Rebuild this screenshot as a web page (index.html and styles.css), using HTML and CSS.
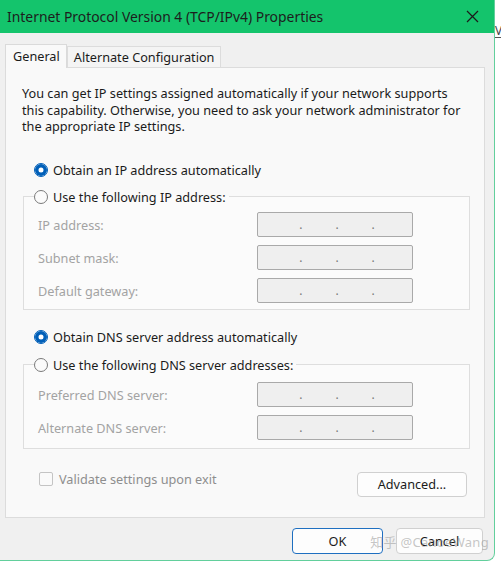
FILE: index.html
```html
<!DOCTYPE html>
<html>
<head>
<meta charset="utf-8">
<link rel="stylesheet" href="styles.css">
</head>
<body>
<div class="screen">
  <div class="dialog">
    <div class="titlebar">
      <span class="title">Internet Protocol Version 4 (TCP/IPv4) Properties</span>
      <svg class="close" width="13" height="13" viewBox="0 0 13 13"><path d="M1 1L12 12M12 1L1 12" stroke="#1b1b1b" stroke-width="1.2" fill="none"/></svg>
    </div>
    <div class="body">
      <div class="tabs">
        <div class="tab active">General</div>
        <div class="tab">Alternate Configuration</div>
      </div>
      <div class="panel">
        <p class="intro">You can get IP settings assigned automatically if your network supports this capability. Otherwise, you need to ask your network administrator for the appropriate IP settings.</p>
        <div class="option first"><span class="radio on"></span><span>Obtain an IP address automatically</span></div>
        <fieldset class="group">
          <legend class="option"><span class="radio"></span><span>Use the following IP address:</span></legend>
          <div class="field"><span class="label">IP address:</span><span class="ipbox"><i>.</i><i>.</i><i>.</i></span></div>
          <div class="field"><span class="label">Subnet mask:</span><span class="ipbox"><i>.</i><i>.</i><i>.</i></span></div>
          <div class="field"><span class="label">Default gateway:</span><span class="ipbox"><i>.</i><i>.</i><i>.</i></span></div>
        </fieldset>
        <div class="option second"><span class="radio on"></span><span>Obtain DNS server address automatically</span></div>
        <fieldset class="group dns">
          <legend class="option"><span class="radio"></span><span>Use the following DNS server addresses:</span></legend>
          <div class="field"><span class="label">Preferred DNS server:</span><span class="ipbox"><i>.</i><i>.</i><i>.</i></span></div>
          <div class="field"><span class="label">Alternate DNS server:</span><span class="ipbox"><i>.</i><i>.</i><i>.</i></span></div>
        </fieldset>
        <div class="bottomrow">
          <div class="check"><span class="box"></span><span>Validate settings upon exit</span></div>
          <button class="btn adv">Advanced...</button>
        </div>
      </div>
      <div class="actions">
        <button class="btn ok">OK</button>
        <button class="btn cancel">Cancel</button>
        <span class="watermark">知乎 @CanoeWang</span>
      </div>
    </div>
  </div>
  <div class="side"><span class="sidechar">V</span></div>
</div>
</body>
</html>
```
FILE: styles.css
```css
* { box-sizing: border-box; }
html, body { margin: 0; padding: 0; background: #fff; }
body {
  font-family: "Noto Sans", "Noto Sans CJK SC", sans-serif;
  font-size: 12.7px;
  color: #1b1b1b;
}
.screen { display: flex; width: 501px; height: 562px; overflow: hidden; }
.dialog {
  width: 495px;
  height: 561px;
  display: flex;
  flex-direction: column;
  border-right: 1px solid #62cf9c;
  border-bottom: 1px solid #62cf9c;
  border-bottom-right-radius: 8px;
  overflow: hidden;
  background: #f0f0f0;
}
.titlebar {
  height: 33px;
  background: #14c46c;
  display: flex;
  align-items: center;
  justify-content: space-between;
  padding: 0 15px 1px 7px;
  flex-shrink: 0;
}
.title { font-size: 13.9px; color: #1d1d1d; }
.close { display: block; margin-top: 1px; }
.body { flex: 1; display: flex; flex-direction: column; padding: 10px 10px 0 5px; }
.tabs { display: flex; align-items: flex-end; height: 24px; }
.tab {
  height: 21px;
  padding: 1px 6px 0 6px;
  border: 1px solid #dcdcdc;
  border-bottom: none;
  background: #f4f4f4;
  color: #1b1b1b;
  line-height: 18px;
}
.tab.active {
  height: 24px;
  padding: 2px 6px 0 7px;
  background: #f9f9f9;
  margin-bottom: -1px;
  position: relative;
  z-index: 1;
  border-color: #dadada;
}
.panel {
  width: 480px;
  height: 451px;
  background: #f9f9f9;
  border: 1px solid #dcdcdc;
  padding: 17px 15px 0 16px;
  display: flex;
  flex-direction: column;
}
.intro { margin: 0; line-height: 16.5px; }
.option { display: flex; align-items: center; gap: 5px; height: 20px; line-height: 20px; }
.option.first { margin: 25px 0 0 12px; }
.option.second { margin: 17px 0 0 12px; }
.radio {
  width: 14px; height: 14px; border-radius: 50%;
  border: 1px solid #7a7a7a; background: #fbfbfb; flex-shrink: 0;
}
.radio.on { border-color: #005fb8; background: #fff; box-shadow: inset 0 0 0 3.5px #005fb8; }
.group {
  margin: 7px 0 0 1px;
  width: 447px;
  border: 1px solid #dedede;
  padding: 6px 0 6px 14px;
  background: #fbfbfb;
}
.group.dns { margin-top: 8px; padding-top: 8px; padding-bottom: 8px; }
.group legend { padding: 0 3px 0 0; margin-left: -4px; }
.field { display: flex; align-items: center; height: 24px; margin-bottom: 9px; }
.field:last-child { margin-bottom: 0; }
.label { width: 219px; color: #a3a3a3; }
.ipbox {
  width: 156px; height: 25px;
  border: 1px solid #a9a9a9; border-radius: 2px;
  background: #efefef;
  display: flex; justify-content: center; gap: 33px;
  padding: 3px 0 0 4px;
  color: #7a7a7a; line-height: 18px;
}
.ipbox i { font-style: normal; font-size: 12px; }
.bottomrow { display: flex; justify-content: space-between; align-items: center; margin-top: 23px; padding-left: 17px; }
.check { display: flex; align-items: center; gap: 6px; color: #8e8e8e; margin-top: -10px; }
.box { width: 14px; height: 14px; border: 1px solid #c4c4c4; border-radius: 2px; background: #fafafa; }
.btn {
  font-family: inherit; font-size: 12.7px; color: #1b1b1b;
  background: #fdfdfd; border: 1px solid #d0d0d0; border-radius: 4px;
  height: 25px; padding: 0;
}
.adv { width: 110px; margin-right: 2px; }
.actions { display: flex; justify-content: flex-end; gap: 13px; padding: 10px 1px 0 0; position: relative; }
.ok { width: 91px; height: 26px; border: 1.5px solid #1e6fc0; border-radius: 4px; }
.cancel { width: 87px; height: 26px; }
.watermark {
  position: absolute; right: -5px; top: 14px;
  font-size: 13px; color: rgba(150,150,150,0.55); letter-spacing: 0.3px;
  pointer-events: none;
}
.side { flex: 1; position: relative; background: #fff; }
.sidechar {
  position: absolute; left: 0; top: 25px; font-size: 12px; color: #444;
  border-bottom: 1px solid #555; line-height: 12px; padding-right: 10px;
}
```
